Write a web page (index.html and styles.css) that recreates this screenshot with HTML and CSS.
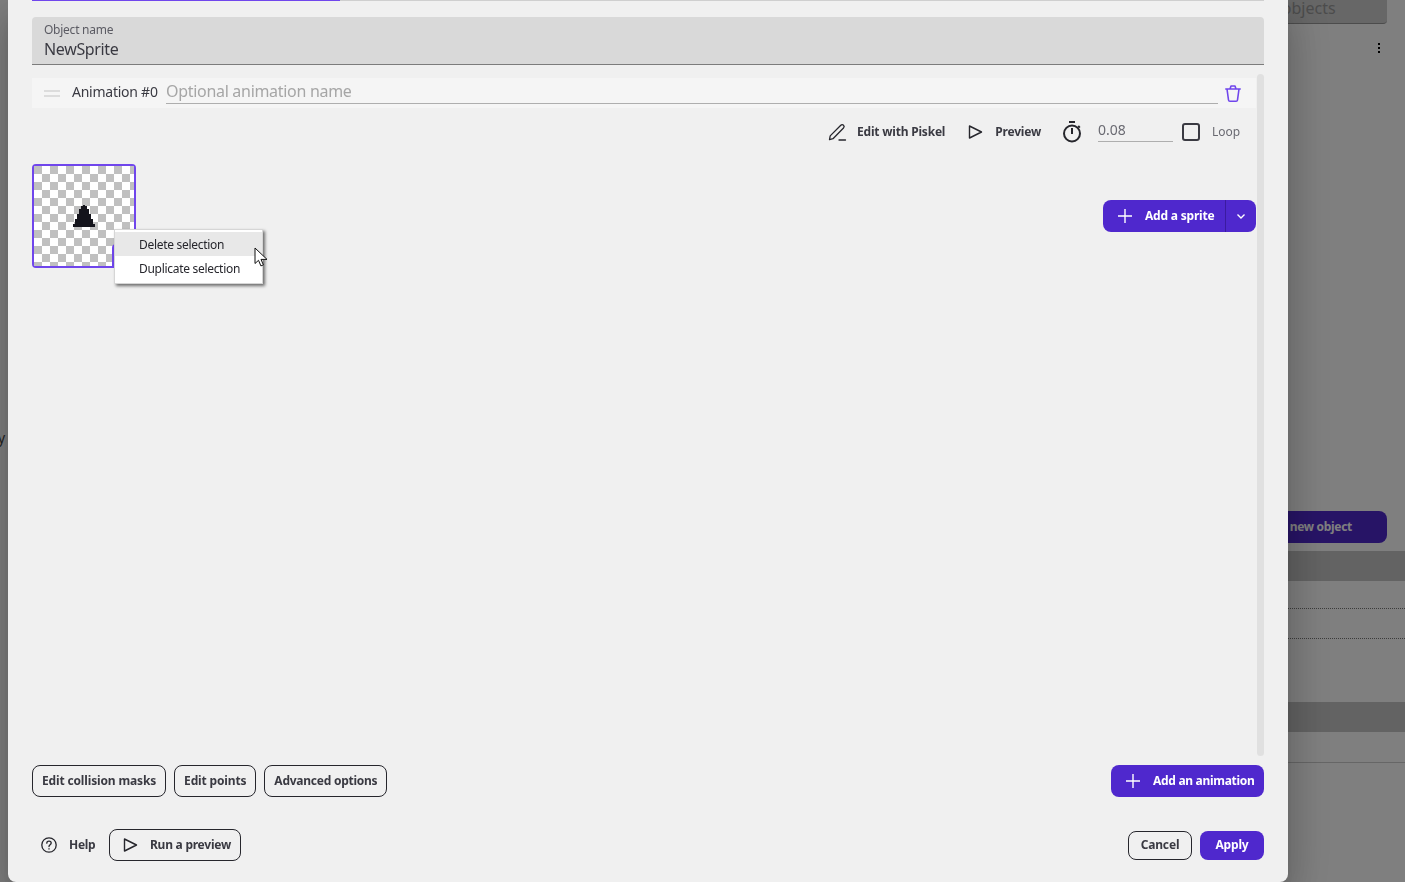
FILE: index.html
```html
<!DOCTYPE html>
<html lang="en">
<head>
<meta charset="utf-8">
<title>Object editor</title>
<link rel="stylesheet" href="styles.css">
</head>
<body>
<div class="page">
  <div class="stage"><span class="stage-text">y</span></div>
  <aside class="side">
    <div class="search">Search objects</div>
    <div class="kebab"><span></span><span></span><span></span></div>
    <div class="side-btn-row"><div class="side-btn">Add a new object</div></div>
    <div class="bar"></div>
    <div class="row dotted"></div>
    <div class="row dotted"></div>
    <div class="row tall"></div>
    <div class="bar"></div>
    <div class="row solid"></div>
  </aside>
</div>
<div class="backdrop"></div>
<section class="dialog">
  <div class="tabs"><div class="tab-on"></div></div>
  <div class="name-field">
    <div class="name-label">Object name</div>
    <div class="name-value">NewSprite</div>
  </div>
  <div class="body">
    <div class="content">
      <div class="anim-row">
        <span class="handle"></span>
        <span class="anim-label">Animation #0</span>
        <div class="anim-input">Optional animation name</div>
        <svg class="trash" width="24" height="24" viewBox="0 0 24 24" fill="none" stroke="#7046ec" stroke-width="1.600" stroke-linecap="round" stroke-linejoin="round"><path d="M4.800 8h14.400M6 8l1.500 11c.1.800.6 1.300 1.400 1.300h6.200c.8 0 1.300-.5 1.400-1.300L18 8M9 8l1-3h4l1 3"/></svg>
      </div>
      <div class="tools">
        <div class="tool">
          <svg class="tool-icon" width="24" height="24" viewBox="0 0 24 24" fill="none" stroke="#26262c" stroke-width="1.300" stroke-linejoin="round" stroke-linecap="round"><path d="M4.500 19.600l.7-3.700L15.800 5.300c.8-.8 1.900-.8 2.700 0 .8.8.8 1.900 0 2.700L8 18.700zM14 20h6.500"/></svg>
          <span class="tool-text">Edit with Piskel</span>
        </div>
        <div class="tool tool-preview">
          <svg class="tool-icon" width="24" height="24" viewBox="0 0 24 24" fill="none" stroke="#26262c" stroke-width="1.400" stroke-linejoin="round"><path d="M6.500 6v12l12-6z"/></svg>
          <span class="tool-text">Preview</span>
        </div>
        <svg class="watch" width="24" height="24" viewBox="0 0 24 24" fill="none" stroke="#26262c" stroke-width="2"><circle cx="12" cy="13.500" r="8"/><path d="M9 2h6M12 8v6M18.200 6l1.600 1.600"/></svg>
        <div class="duration">0.08</div>
        <span class="check"></span>
        <span class="loop">Loop</span>
      </div>
      <div class="sprites">
        <div class="thumb">
          <svg class="checker" width="100" height="100" viewBox="0 0 100 100" shape-rendering="crispEdges">
            <defs>
              <pattern id="checks" width="16" height="16" patternUnits="userSpaceOnUse">
                <rect width="16" height="16" fill="#fff"/>
                <rect width="8" height="8" fill="#c0c0c0"/>
                <rect x="8" y="8" width="8" height="8" fill="#c0c0c0"/>
              </pattern>
            </defs>
            <rect width="100" height="100" fill="url(#checks)"/>
          </svg>
          <svg class="sprite" width="22" height="22" viewBox="0 0 22 22" shape-rendering="crispEdges"><path fill="#14141c" d="M10 0h2v1h2v3h2v5h2v5h2v5h2v3H0v-3h2v-5h2V9h2V4h2V1h2z"/></svg>
          <span class="thumb-badge"></span>
        </div>
        <div class="split">
          <div class="split-main">
            <svg width="16" height="16" viewBox="0 0 16 16" stroke="#fff" stroke-width="1.400"><path d="M8 1v14M1 8h14"/></svg>
            <span class="split-text">Add a sprite</span>
          </div>
          <div class="split-arrow">
            <svg width="10" height="10" viewBox="0 0 10 10" fill="none" stroke="#fff" stroke-width="1.400"><path d="M1.500 3.500L5 7l3.500-3.500"/></svg>
          </div>
        </div>
      </div>
    </div>
    <div class="scrollbar"></div>
  </div>
  <div class="foot-row">
    <div class="btn-group">
      <div class="btn outline">Edit collision masks</div>
      <div class="btn outline">Edit points</div>
      <div class="btn outline">Advanced options</div>
    </div>
    <div class="btn primary add-anim">
      <svg width="16" height="16" viewBox="0 0 16 16" stroke="#fff" stroke-width="1.400"><path d="M8 1v14M1 8h14"/></svg>
      <span>Add an animation</span>
    </div>
  </div>
  <div class="actions">
    <div class="help">
      <svg width="18" height="18" viewBox="0 0 18 18" fill="none" stroke="#26262c" stroke-width="1.300"><circle cx="9" cy="9" r="7.200"/><path d="M6.800 7.200c0-1.300 1-2.100 2.200-2.100s2.200.8 2.200 2c0 1.700-2.200 1.700-2.200 3.400" stroke-linecap="round"/><path d="M9 12.300v1.300"/></svg>
      <span>Help</span>
    </div>
    <div class="btn outline run">
      <svg width="24" height="24" viewBox="0 0 24 24" fill="none" stroke="#26262c" stroke-width="1.400" stroke-linejoin="round"><path d="M6.500 6v12l12-6z"/></svg>
      <span>Run a preview</span>
    </div>
    <div class="actions-end">
      <div class="btn outline small">Cancel</div>
      <div class="btn primary small">Apply</div>
    </div>
  </div>
</section>
<div class="menu">
  <div class="menu-item active">Delete selection</div>
  <div class="menu-item">Duplicate selection</div>
</div>
<svg class="cursor" width="14" height="21" viewBox="0 0 14 21"><path d="M1 1v15.500l3.500-3.200 2.400 5.600 2.500-1-2.400-5.500H13z" fill="#fff" stroke="#111" stroke-width="1"/></svg>
</body>
</html>
```
FILE: styles.css
```css
* { box-sizing: border-box; }
html, body { margin: 0; height: 100%; overflow: hidden; }
body { font-family: "Noto Sans", "Open Sans", sans-serif; color: #26262c; background: #fff; }

.page { display: flex; height: 882px; }
.stage { flex: 1; display: flex; align-items: center; font-size: 14px; color: #444; }
.stage-text { margin-left: -2px; margin-top: -8px; }
.side { width: 190px; display: flex; flex-direction: column; }
.search { height: 24px; margin-right: 18px; background: #cfcfcf; border-bottom: 1px solid #999; border-radius: 0 0 4px 4px; padding-left: 12px; font-size: 16px; line-height: 16px; color: #999; }
.kebab { height: 16px; margin: 19px 25px 0 0; display: flex; flex-direction: column; align-items: flex-end; gap: 2px; }
.kebab span { width: 2px; height: 2px; background: #000; }
.side-btn-row { margin-top: 452px; padding-right: 18px; }
.side-btn { height: 32px; background: #4f28cd; border-radius: 0 8px 8px 0; color: #fff; font-weight: 700; font-size: 12px; letter-spacing: -.3px; line-height: 32px; text-align: right; padding-right: 35px; }
.bar { height: 30px; background: #c6c6c6; margin-top: 8px; }
.row { height: 29px; }
.dotted { height: 28px; border-bottom: 1px dotted #777; }
.dotted + .dotted { height: 30px; }
.tall { height: 63px; }
.row.tall + .bar { margin-top: 0; }
.solid { height: 31px; border-bottom: 1px solid #ccc; }

.backdrop { position: fixed; inset: 0; background: rgba(0, 0, 0, .5); }

.dialog { position: fixed; left: 8px; top: 0; width: 1280px; height: 882px; padding: 0 24px; background: #f0f0f0; border-radius: 0 0 8px 8px; display: flex; flex-direction: column; box-shadow: 0 11px 15px -7px rgba(0,0,0,.2), 0 24px 38px 3px rgba(0,0,0,.14), 0 9px 46px 8px rgba(0,0,0,.12); }

.tabs { height: 1px; background: #cfcfcf; margin-bottom: 16px; flex: none; }
.tab-on { width: 308px; height: 1px; background: #7046ec; }

.name-field { height: 48px; flex: none; background: #d9d9d9; border-bottom: 1px solid #7c7c7c; border-radius: 4px 4px 0 0; padding: 6px 12px 0; }
.name-label { font-size: 12px; line-height: 14px; letter-spacing: -.25px; color: #5b5b63; }
.name-value { font-size: 16px; line-height: 22px; margin-top: 1px; letter-spacing: -.35px; color: #3a3a42; }

.body { height: 682px; margin-top: 9px; flex: none; display: flex; gap: 1px; }
.content { width: 1224px; padding-top: 4px; }
.scrollbar { width: 7px; background: #e0e0e0; border-radius: 4px; }

.anim-row { height: 30px; background: #f5f5f5; display: flex; align-items: center; padding-left: 12px; }
.handle { width: 16px; height: 7px; border-top: 2px solid #dcdcdc; border-bottom: 2px solid #dcdcdc; margin-right: 12px; }
.anim-label { font-size: 14px; letter-spacing: -.25px; padding-bottom: 4px; color: #3a3a42; width: 94px; white-space: nowrap; }
.anim-input { width: 1052px; height: 24px; margin-bottom: 2px; border-bottom: 1px solid #aeaeae; font-size: 16px; line-height: 23px; color: #a6a6a6; letter-spacing: -.3px; }
.trash { margin-left: 3px; }

.tools { height: 32px; margin-top: 8px; padding-right: 16px; display: flex; justify-content: flex-end; align-items: center; }
.tool { display: flex; align-items: center; gap: 8px; }
.tool-preview { margin-left: 18px; }
.tool-text { font-size: 12px; font-weight: 700; letter-spacing: -.2px; padding-bottom: 2px; color: #3a3a42; white-space: nowrap; }
.watch { margin-left: 19px; }
.duration { width: 75px; height: 22px; margin: 0 0 2px 14px; border-bottom: 1px solid #aeaeae; font-size: 14px; line-height: 19px; color: #6a6a72; }
.check { width: 18px; height: 18px; margin-left: 9px; border: 2px solid #3a3a42; border-radius: 3px; }
.loop { font-size: 12px; padding-bottom: 2px; color: #6a6a72; margin-left: 12px; width: 28px; }

.sprites { height: 104px; margin-top: 16px; display: flex; justify-content: space-between; align-items: center; }
.thumb { position: relative; width: 104px; height: 104px; border: 2px solid #7046ec; border-radius: 4px; background: #fff; display: flex; align-items: center; justify-content: center; }
.checker { position: absolute; left: 0; top: 0; }
.sprite { display: block; position: relative; }
.thumb-badge { position: absolute; right: 0; bottom: 0; width: 22px; height: 22px; background: #7046ec; border-radius: 4px 0 0 0; }

.split { height: 32px; display: flex; background: #4f28cd; border-radius: 8px; color: #fff; }
.split-main { width: 123px; padding-left: 14px; display: flex; align-items: center; gap: 12px; font-size: 12px; font-weight: 700; white-space: nowrap; border-right: 1px solid #3b1ba0; }
.split-text { letter-spacing: -.2px; padding-bottom: 2px; }
.split-arrow { width: 30px; display: flex; align-items: center; justify-content: center; }

.foot-row { margin-top: 9px; height: 32px; flex: none; display: flex; justify-content: space-between; }
.btn-group { display: flex; gap: 8px; }
.btn { height: 32px; padding-bottom: 2px; border-radius: 8px; font-size: 12px; font-weight: 700; letter-spacing: -.15px; display: flex; align-items: center; white-space: nowrap; }
.btn-group .btn:last-child { letter-spacing: -.25px; }
.outline { border: 1px solid #26262c; padding: 0 9px 2px; color: #3a3a42; }
.primary { background: #4f28cd; color: #fff; }
.add-anim { width: 153px; padding-left: 14px; gap: 12px; letter-spacing: -.3px; }
.add-anim svg { margin-top: 2px; }

.actions { margin-top: 32px; height: 32px; flex: none; display: flex; align-items: center; }
.help { display: flex; align-items: center; gap: 11px; font-size: 12px; font-weight: 700; letter-spacing: -.3px; color: #3a3a42; padding-left: 8px; width: 77px; }
.help span { padding-bottom: 2px; }
.run { width: 132px; gap: 8px; padding-left: 8px; letter-spacing: -.25px; }
.run svg { margin-top: 2px; }
.actions-end { margin-left: auto; display: flex; gap: 8px; }
.small { width: 64px; height: 29px; padding: 0 0 2px; justify-content: center; }

.menu { position: fixed; left: 114px; top: 229px; width: 149px; height: 55px; padding-top: 2px; background: #fff; border: 1px solid #d6d6d6; box-shadow: 2px 2px 3px rgba(0,0,0,.55); }
.menu-item { height: 24px; padding-left: 24px; font-size: 12px; letter-spacing: -.3px; line-height: 25px; color: #26262c; }
.menu-item.active { background: #e8e8e8; }
.cursor { position: fixed; left: 254px; top: 247px; }
```
